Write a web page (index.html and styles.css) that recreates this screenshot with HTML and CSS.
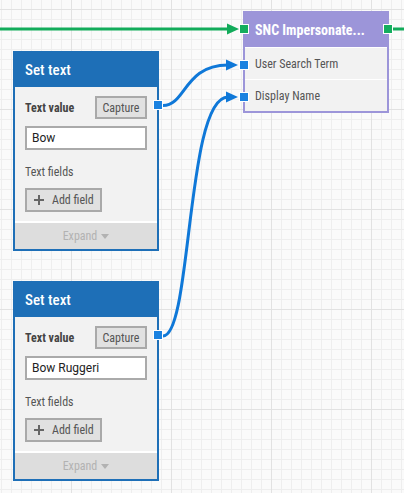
FILE: index.html
```html
<!DOCTYPE html>
<html>
<head>
<meta charset="utf-8">
<link rel="stylesheet" href="styles.css">
</head>
<body>
<div class="canvas">
  <svg class="wires" width="404" height="493" viewBox="0 0 404 493">
    <line x1="0" y1="29" x2="229" y2="29" stroke="#12ab5a" stroke-width="3"/>
    <polygon points="227,23.5 239,29 227,34.5" fill="#12ab5a"/>
    <line x1="392" y1="29" x2="404" y2="29" stroke="#12ab5a" stroke-width="3"/>
    <path d="M163,105.5 C186,105.5 184,65 228,65" fill="none" stroke="#0f78d8" stroke-width="3"/>
    <polygon points="226,59.5 238,65 226,70.5" fill="#0f78d8"/>
    <path d="M163,336 C192,336 186,97 228,97" fill="none" stroke="#0f78d8" stroke-width="3"/>
    <polygon points="226,91.5 238,97 226,102.5" fill="#0f78d8"/>
  </svg>

  <div class="card card-a">
    <div class="card-head cond">Set text</div>
    <div class="card-body">
      <div class="row">
        <span class="label-strong cond">Text value</span>
        <span class="btn btn-capture cond">Capture</span>
      </div>
      <div class="input">Bow</div>
      <div class="fields-label cond">Text fields</div>
      <div class="btn btn-add cond"><span class="plus"></span>Add field</div>
    </div>
    <div class="card-foot cond">Expand<span class="caret"></span></div>
    <span class="port port-out"></span>
  </div>

  <div class="card card-b">
    <div class="card-head cond">Set text</div>
    <div class="card-body">
      <div class="row">
        <span class="label-strong cond">Text value</span>
        <span class="btn btn-capture cond">Capture</span>
      </div>
      <div class="input">Bow Ruggeri</div>
      <div class="fields-label cond">Text fields</div>
      <div class="btn btn-add cond"><span class="plus"></span>Add field</div>
    </div>
    <div class="card-foot cond">Expand<span class="caret"></span></div>
    <span class="port port-out"></span>
  </div>

  <div class="node">
    <div class="node-head cond">SNC Impersonate...</div>
    <div class="node-row cond">User Search Term</div>
    <div class="node-row cond">Display Name</div>
    <span class="port port-in port-in-1"></span>
    <span class="port port-in port-in-2"></span>
    <span class="port port-green port-flow-in"></span>
    <span class="port port-green port-flow-out"></span>
  </div>
</div>
</body>
</html>
```

FILE: styles.css
```css
html, body {
  margin: 0;
  padding: 0;
}

body {
  font-family: Roboto, "Liberation Sans", sans-serif;
  font-size: 12px;
}

.canvas {
  position: relative;
  width: 404px;
  height: 493px;
  overflow: hidden;
  background:
    linear-gradient(to right, #e2e2e2 1px, transparent 1px) 71px 0 / 100px 100px,
    linear-gradient(to bottom, #e2e2e2 1px, transparent 1px) 0 9px / 100px 100px,
    linear-gradient(to right, #eeeeee 1px, transparent 1px) 1px 0 / 10px 10px,
    linear-gradient(to bottom, #eeeeee 1px, transparent 1px) 0 9px / 10px 10px,
    #fafafa;
}

.wires {
  position: absolute;
  left: 0;
  top: 0;
}

.cond {
  font-family: "Roboto Condensed", Roboto, "Liberation Sans", sans-serif;
  font-stretch: 85%;
}

.card {
  position: absolute;
  left: 13px;
  width: 146px;
  height: 200px;
  box-sizing: border-box;
  border: 2px solid #1e6fb7;
  background: #f2f2f2;
  display: flex;
  flex-direction: column;
}

.card-a { top: 51px; }
.card-b { top: 281px; }

.card-head {
  height: 34px;
  flex: none;
  background: #1e6fb7;
  color: #fff;
  font-size: 15px;
  font-weight: 500;
  display: flex;
  align-items: center;
  margin: 0 -2px;
  padding-left: 12px;
}

.card-body {
  flex: 1;
  padding: 9px 10px 0;
  display: flex;
  flex-direction: column;
}

.row {
  display: flex;
  justify-content: space-between;
  align-items: center;
  height: 23px;
}

.label-strong {
  font-weight: bold;
  color: #444;
  font-size: 12px;
}

.btn {
  box-sizing: border-box;
  border: 2px solid #a9a9a9;
  background: #e1e1e1;
  color: #555;
  font-size: 12px;
  display: flex;
  align-items: center;
}

.btn-capture {
  width: 52px;
  height: 23px;
  justify-content: center;
}

.input {
  margin-top: 7px;
  height: 24px;
  box-sizing: border-box;
  border: 2px solid #aaaaaa;
  background: #fff;
  padding-left: 5px;
  color: #222;
  font-size: 12px;
  display: flex;
  align-items: center;
}

.fields-label {
  margin-top: 14px;
  height: 16px;
  line-height: 16px;
  color: #555;
}

.btn-add {
  margin-top: 8px;
  width: 77px;
  height: 24px;
  padding-left: 7px;
}

.plus {
  position: relative;
  width: 10px;
  height: 10px;
  margin-right: 8px;
}

.plus::before,
.plus::after {
  content: "";
  position: absolute;
  background: #666;
}

.plus::before {
  left: 0;
  top: 4px;
  width: 10px;
  height: 2px;
}

.plus::after {
  left: 4px;
  top: 0;
  width: 2px;
  height: 10px;
}

.card-foot {
  flex: none;
  height: 26px;
  border-top: 2px solid #fff;
  background: #dddddd;
  color: #b2b2b2;
  font-size: 12px;
  display: flex;
  align-items: center;
  justify-content: center;
}

.caret {
  width: 0;
  height: 0;
  margin-left: 4px;
  border-left: 4px solid transparent;
  border-right: 4px solid transparent;
  border-top: 5px solid #b2b2b2;
}

.port {
  position: absolute;
  width: 8px;
  height: 8px;
  border: 1px solid #fff;
  background: #1b82e0;
}

.port-out {
  left: 138px;
  top: 47px;
}

.node {
  position: absolute;
  left: 243px;
  top: 11px;
  width: 146px;
  box-sizing: border-box;
  border: 2px solid #9c95d9;
  background: #f2f2f2;
}

.node-head {
  height: 34px;
  background: #9c95d9;
  color: #fff;
  font-size: 14px;
  font-weight: bold;
  line-height: 34px;
  padding: 0 6px 0 10px;
  white-space: nowrap;
  overflow: hidden;
}

.node-row {
  height: 32px;
  box-sizing: border-box;
  border-top: 1px solid #fff;
  padding-left: 10px;
  display: flex;
  align-items: center;
  color: #555;
  font-size: 12px;
}

.port-in { left: -6px; }
.port-in-1 { top: 47px; }
.port-in-2 { top: 79px; }

.port-green {
  background: #14ad5e;
  top: 11px;
}

.port-flow-in { left: -6px; }
.port-flow-out { left: 138px; }
```
